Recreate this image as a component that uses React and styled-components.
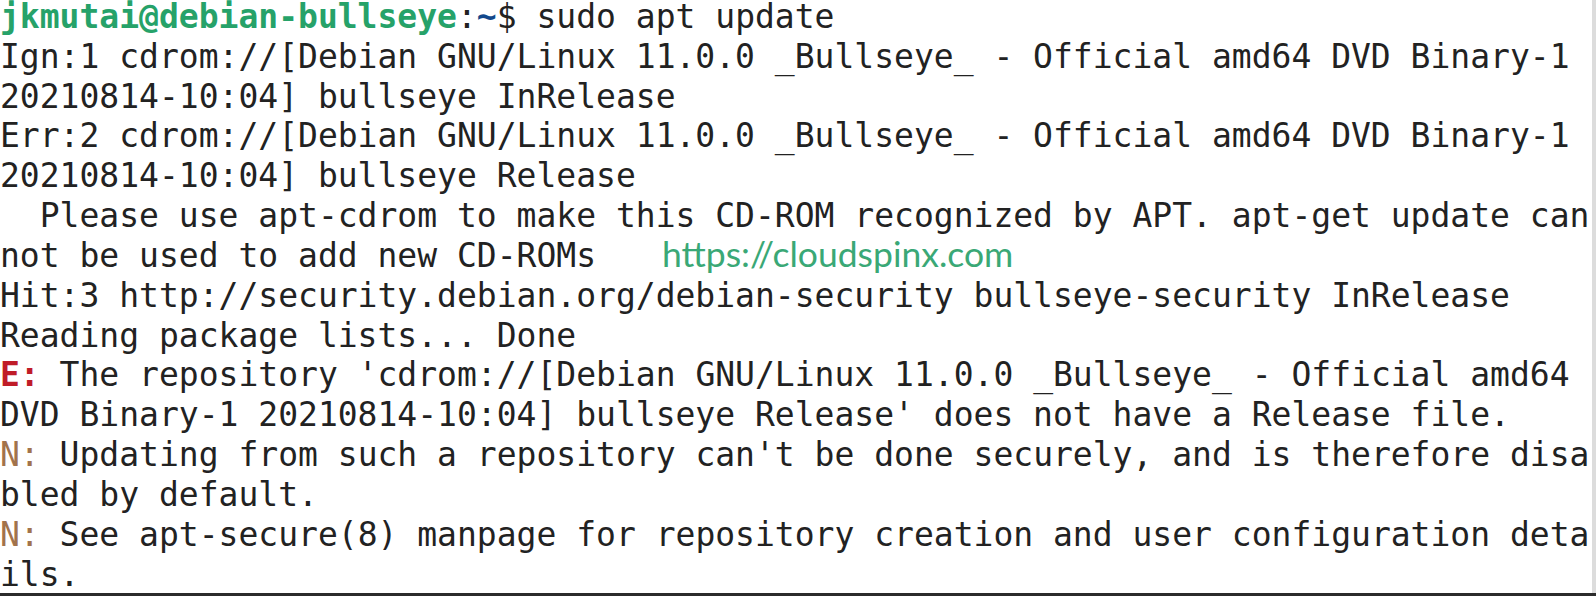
import React from "react";
import styled, { createGlobalStyle } from "styled-components";

const GlobalStyle = createGlobalStyle`
  html, body {
    margin: 0;
    padding: 0;
    background: #ffffff;
  }
`;

const lines = [
  [
    { t: "jkmutai@debian-bullseye", kind: "user" },
    { t: ":", kind: "plain" },
    { t: "~", kind: "path" },
    { t: "$ sudo apt update", kind: "plain" },
  ],
  [{ t: "Ign:1 cdrom://[Debian GNU/Linux 11.0.0 _Bullseye_ - Official amd64 DVD Binary-1" }],
  [{ t: "20210814-10:04] bullseye InRelease" }],
  [{ t: "Err:2 cdrom://[Debian GNU/Linux 11.0.0 _Bullseye_ - Official amd64 DVD Binary-1" }],
  [{ t: "20210814-10:04] bullseye Release" }],
  [{ t: "  Please use apt-cdrom to make this CD-ROM recognized by APT. apt-get update can" }],
  [{ t: "not be used to add new CD-ROMs" }],
  [{ t: "Hit:3 http://security.debian.org/debian-security bullseye-security InRelease" }],
  [{ t: "Reading package lists... Done" }],
  [
    { t: "E:", kind: "err" },
    { t: " The repository 'cdrom://[Debian GNU/Linux 11.0.0 _Bullseye_ - Official amd64" },
  ],
  [{ t: "DVD Binary-1 20210814-10:04] bullseye Release' does not have a Release file." }],
  [
    { t: "N:", kind: "note" },
    { t: " Updating from such a repository can't be done securely, and is therefore disa" },
  ],
  [{ t: "bled by default." }],
  [
    { t: "N:", kind: "note" },
    { t: " See apt-secure(8) manpage for repository creation and user configuration deta" },
  ],
  [{ t: "ils." }],
];

const colors = {
  plain: "#222222",
  user: "#26a269",
  path: "#12488b",
  err: "#c01c28",
  note: "#a2734c",
};

export default function App() {
  return (
    <>
      <GlobalStyle />
      <Window>
        <Body>
          <Terminal>
            {lines.map((line, i) => (
              <Line key={i}>
                {line.map((seg, j) => (
                  <Seg key={j} kind={seg.kind || "plain"}>
                    {seg.t}
                  </Seg>
                ))}
              </Line>
            ))}
            <Watermark>https://cloudspinx.com</Watermark>
          </Terminal>
          <Scrollbar />
        </Body>
        <BottomEdge />
      </Window>
    </>
  );
}

const Window = styled.div`
  width: 1596px;
  height: 596px;
  display: flex;
  flex-direction: column;
  overflow: hidden;
  background: #ffffff;
`;

const Body = styled.div`
  flex: 1;
  display: flex;
  min-height: 0;
`;

const Terminal = styled.div`
  position: relative;
  flex: 1;
  font-family: "DejaVu Sans Mono", monospace;
  font-size: 33px;
  color: #222222;
`;

// a terminal row: fixed cell height, glyphs set a bit high like vte does
const Line = styled.div`
  white-space: pre;
  height: 39.84px;
  line-height: 33.84px;
`;

const Seg = styled.span`
  color: ${(p) => colors[p.kind]};
  font-weight: ${(p) => (p.kind === "plain" || p.kind === "note" ? 400 : 700)};
`;

const Watermark = styled.div`
  position: absolute;
  left: 662px;
  top: 234px;
  font-family: "Lato", "Open Sans", sans-serif;
  font-size: 35.5px;
  line-height: 40px;
  color: #3aa876;
  white-space: nowrap;
`;

const Scrollbar = styled.div`
  width: 4px;
  background: #dcdcdc;
`;

const BottomEdge = styled.div`
  height: 3px;
  background: #2b2b2b;
`;
